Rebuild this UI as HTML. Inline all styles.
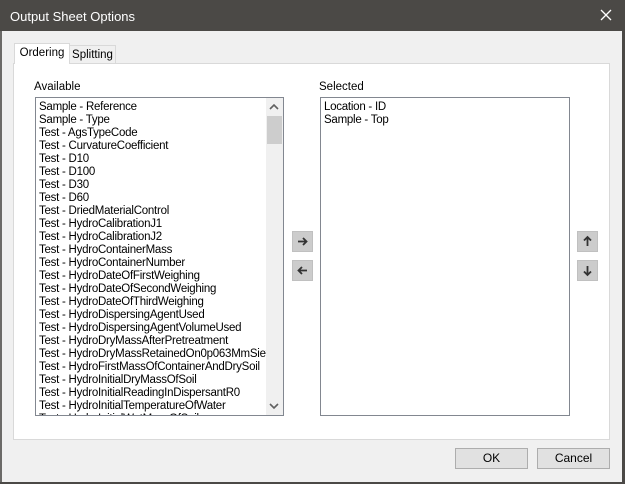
<!DOCTYPE html>
<html><head><style>
*{margin:0;padding:0;box-sizing:border-box}
body{width:625px;height:484px;overflow:hidden;background:#f0f0f0;font-family:"Liberation Sans",sans-serif;font-size:11.5px;color:#000;position:relative}
.abs{position:absolute}
#title{left:0;top:0;width:625px;height:31px;background:#4b4946;color:#fff;font-size:13px;padding:9px 0 0 10px}
#rb{left:622px;top:31px;width:3px;height:453px;background:#4b4946}
#bb{left:0;top:482px;width:625px;height:2px;background:#4b4946}
#lb{left:0;top:31px;width:2px;height:453px;background:#6b6a68}
.page{left:13px;top:63px;width:597px;height:377px;background:#fff;border:1px solid #d9d9d9}
.tab{border:1px solid #d9d9d9;border-bottom:none;text-align:center}
.list{background:#fff;border:1px solid #828790;overflow:hidden}
.item{height:13px;line-height:13px;padding-left:3px;white-space:nowrap;letter-spacing:-0.25px}
.sb{background:#f0f0f0}
.btn{background:#cccccc;border:1px solid #c0c0c0}
.dbtn{background:#e1e1e1;border:1px solid #adadad;text-align:center;line-height:19px;font-size:12px}
</style></head><body>
<div id="title" class="abs">Output Sheet Options</div>
<svg class="abs" style="left:600px;top:9px" width="12" height="12"><path d="M1 1L11 11M11 1L1 11" stroke="#fff" stroke-width="1.3"/></svg>
<div id="lb" class="abs"></div><div id="rb" class="abs"></div><div id="bb" class="abs"></div>
<div class="abs page"></div>
<div class="abs tab" style="left:69px;top:45px;width:47px;height:18px;background:#f0f0f0;padding-top:3px">Splitting</div>
<div class="abs tab" style="left:14px;top:43px;width:56px;height:21px;background:#fff;padding-top:3px">Ordering</div>
<div class="abs" style="left:34px;top:81px">Available</div>
<div class="abs" style="left:319px;top:81px">Selected</div>
<div class="abs list" style="left:35px;top:97px;width:249px;height:319px;padding-top:3px">
<div class="item">Sample - Reference</div><div class="item">Sample - Type</div><div class="item">Test - AgsTypeCode</div><div class="item">Test - CurvatureCoefficient</div><div class="item">Test - D10</div><div class="item">Test - D100</div><div class="item">Test - D30</div><div class="item">Test - D60</div><div class="item">Test - DriedMaterialControl</div><div class="item">Test - HydroCalibrationJ1</div><div class="item">Test - HydroCalibrationJ2</div><div class="item">Test - HydroContainerMass</div><div class="item">Test - HydroContainerNumber</div><div class="item">Test - HydroDateOfFirstWeighing</div><div class="item">Test - HydroDateOfSecondWeighing</div><div class="item">Test - HydroDateOfThirdWeighing</div><div class="item">Test - HydroDispersingAgentUsed</div><div class="item">Test - HydroDispersingAgentVolumeUsed</div><div class="item">Test - HydroDryMassAfterPretreatment</div><div class="item">Test - HydroDryMassRetainedOn0p063MmSieve</div><div class="item">Test - HydroFirstMassOfContainerAndDrySoil</div><div class="item">Test - HydroInitialDryMassOfSoil</div><div class="item">Test - HydroInitialReadingInDispersantR0</div><div class="item">Test - HydroInitialTemperatureOfWater</div><div class="item">Test - HydroInitialWetMassOfSoil</div>
</div>
<div class="abs sb" style="left:266px;top:98px;width:17px;height:317px"></div>
<div class="abs" style="left:267px;top:116px;width:15px;height:28px;background:#cdcdcd"></div>
<svg class="abs" style="left:269px;top:103px" width="10" height="8"><path d="M1 6L5 2L9 6" stroke="#606060" stroke-width="1.6" fill="none"/></svg>
<svg class="abs" style="left:269px;top:402px" width="10" height="8"><path d="M1 2L5 6L9 2" stroke="#606060" stroke-width="1.6" fill="none"/></svg>
<div class="abs list" style="left:320px;top:97px;width:250px;height:319px;padding-top:3px">
<div class="item">Location - ID</div><div class="item">Sample - Top</div></div>
<div class="abs btn" style="left:292px;top:231px;width:21px;height:21px"></div>
<div class="abs btn" style="left:292px;top:260px;width:21px;height:21px"></div>
<div class="abs btn" style="left:577px;top:231px;width:21px;height:21px"></div>
<div class="abs btn" style="left:577px;top:260px;width:21px;height:21px"></div>
<svg class="abs" style="left:292px;top:231px" width="21" height="21"><path d="M6 10.5H14M11 7L14.5 10.5L11 14" stroke="#333" stroke-width="1.8" fill="none"/></svg>
<svg class="abs" style="left:292px;top:260px" width="21" height="21"><path d="M7 10.5H15M10 7L6.5 10.5L10 14" stroke="#333" stroke-width="1.8" fill="none"/></svg>
<svg class="abs" style="left:577px;top:231px" width="21" height="21"><path d="M10.5 6V15M7 9.5L10.5 6L14 9.5" stroke="#333" stroke-width="1.8" fill="none"/></svg>
<svg class="abs" style="left:577px;top:260px" width="21" height="21"><path d="M10.5 6V15M7 11.5L10.5 15L14 11.5" stroke="#333" stroke-width="1.8" fill="none"/></svg>
<div class="abs dbtn" style="left:455px;top:448px;width:73px;height:21px">OK</div>
<div class="abs dbtn" style="left:537px;top:448px;width:73px;height:21px">Cancel</div>
</body></html>
